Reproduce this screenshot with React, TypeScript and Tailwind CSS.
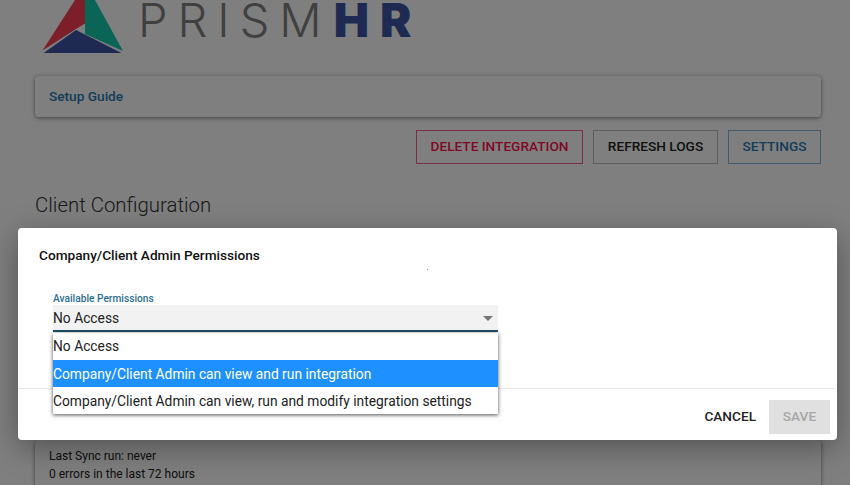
import React from 'react';

const roboto = { fontFamily: 'Roboto, sans-serif' };

const options = [
  'No Access',
  'Company/Client Admin can view and run integration',
  'Company/Client Admin can view, run and modify integration settings',
];

const Logo: React.FC = () => (
  <div className="flex h-[53px] items-start overflow-hidden pl-[7px]">
    <svg width="82" height="54" viewBox="0 0 82 54" className="shrink-0">
      <path d="M0.5 50.5 L33 0 L43 0 L43 23.5 L34 29 Z" fill="#f83e56" />
      <path d="M43 0 L53 0 L81 51 L43 34 Z" fill="#16caac" />
      <path d="M1 53.5 L34 30 L80.5 53.5 Z" fill="#3c54a4" />
    </svg>
    <div
      className="ml-[14px] flex h-[53px] items-start pt-[1px] text-[47px] leading-[38px] text-[#808080]"
      style={{ fontFamily: 'Inter, sans-serif' }}
    >
      <span className="font-light tracking-[10px]">PRISM</span>
      <span className="ml-[2px] font-black tracking-[11px] text-[#3c54a4]">HR</span>
    </div>
  </div>
);

const App: React.FC = () => {
  return (
    <div className="relative h-[485px] w-[850px] overflow-hidden bg-white text-[13.65px]" style={roboto}>
      <div className="flex flex-col pl-[35px] pr-[29px]">
        <Logo />
        <div className="mt-[23px] flex h-[41px] items-center rounded bg-white px-[14px] font-medium text-[#2a7ab0] shadow-[0_1px_4px_rgba(0,0,0,0.5)]">
          Setup Guide
        </div>

        <div className="mt-[13px] flex justify-end gap-[10px] font-medium">
          <button className="h-[34px] w-[167px] border border-[#f0608a] pb-[1px] text-[#ff1050]">DELETE INTEGRATION</button>
          <button className="h-[34px] w-[125px] border border-[#bdbdbd] pb-[1px] text-[#212121]">REFRESH LOGS</button>
          <button className="h-[34px] w-[93px] border border-[#7ab8e0] pb-[1px] text-[#2a7ab0]">SETTINGS</button>
        </div>

        <h2 className="mt-[27px] text-[20.4px] leading-7 font-light text-[#333333]">Client Configuration</h2>

        <div className="mt-[221px] h-[80px] rounded bg-white px-[14px] pt-[7px] text-[12px] leading-[18px] text-[#212121] shadow-[0_1px_4px_rgba(0,0,0,0.5)]">
          <p>Last Sync run: never</p>
          <p>0 errors in the last 72 hours</p>
        </div>
      </div>

      {/* modal backdrop */}
      <div className="absolute inset-0 bg-black/50 pt-[228px] pl-[18px]">
        <div className="relative h-[212px] w-[819px] rounded bg-white shadow-[0_8px_30px_rgba(0,0,0,0.35)]">
          <div className="px-[21px] pt-[19px] leading-4 font-medium text-[#111111]">
            Company/Client Admin Permissions
          </div>
          <span className="absolute top-[41px] left-[409px] h-px w-px bg-[#999999]" />
          <div className="mt-[30px] ml-[35px] w-[445px]">
            <label className="block text-[10.2px] leading-3 font-medium text-[#2c6e91]">Available Permissions</label>
            <div className="flex h-[27px] items-center justify-between border-b-2 border-[#1f4f6b] bg-[#f2f2f2] pt-[1px] pr-[5px] text-[13.8px] text-[#222222]">
              <span>No Access</span>
              <svg width="10" height="5" viewBox="0 0 10 5"><path d="M0 0 L10 0 L5 5 Z" fill="#757575" /></svg>
            </div>
          </div>
          <div className="mt-[56px] mr-[3px] flex items-start justify-end border-t border-[#e8e8e8] pt-[11px] pr-[4px]">
            <button className="mt-[8px] mr-[13px] leading-4 font-medium text-[#212121]">CANCEL</button>
            <button className="h-[34px] w-[61px] bg-[#e0e0e0] pb-[1px] font-medium text-[#a6a6a6]">SAVE</button>
          </div>

          {/* open select menu */}
          <ul className="absolute top-[105px] left-[35px] w-[445px] bg-white text-[13.8px] leading-[27px] text-[#222222] shadow-[0_1px_4px_rgba(0,0,0,0.7)]">
            {options.map((option, i) => (
              <li key={option} className={i === 1 ? 'h-[27px] bg-[#1e90ff] pt-px text-white' : i === 2 ? 'h-[27px] pt-px' : 'h-[27px]'}>
                {option}
              </li>
            ))}
          </ul>
        </div>
      </div>
    </div>
  );
};

export default App;
